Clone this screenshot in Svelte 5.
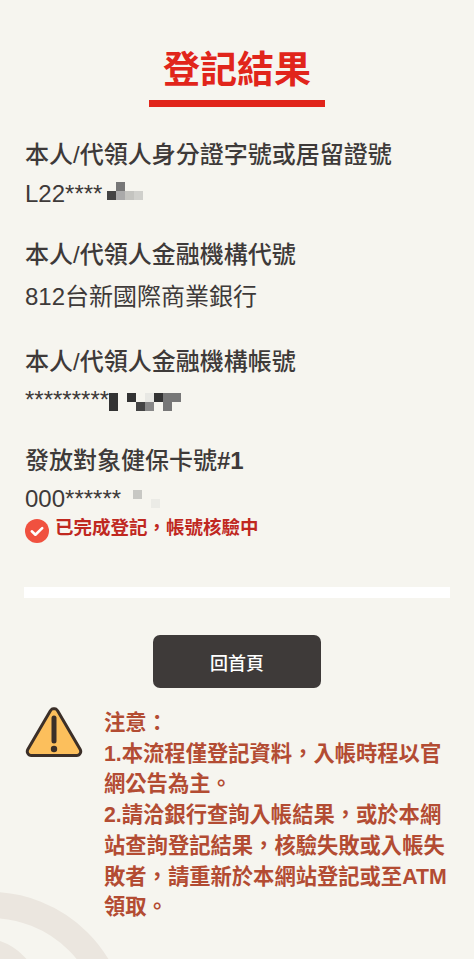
<script>
  const fields = [
    { label: '本人/代領人身分證字號或居留證號', value: 'L22****', blocks: [[0,1,'#444'],[1,1,'#aaa'],[2,1,'#c4c4c0'],[3,1,'#d0d0cc'],[1,0,'#777']], w: 4, x: 5, y: -6 },
    { label: '本人/代領人金融機構代號', value: '812台新國際商業銀行' },
    { label: '本人/代領人金融機構帳號', value: '*********', blocks: [[0,0,'#333'],[0,1,'#333'],[2,0,'#333'],[3,1,'#444'],[4,1,'#888'],[4,0,'#e8e8e4'],[5,0,'#333'],[6,0,'#777'],[7,0,'#777'],[6,1,'#777']], w: 8, x: 0, y: 4 },
    { label: '發放對象健保卡號', suffix: '#1', value: '000******', blocks: [[1,0,'#c8c8c4'],[3,1,'#ebebe6']], w: 4, x: 3, y: 0 }
  ];
</script>

<main class="page">
  <svg class="decor" width="140" height="70" viewBox="0 889 140 70" aria-hidden="true">
    <circle class="outer" cx="-10" cy="1030" r="125" />
    <circle class="inner" cx="-20" cy="1000" r="51" />
  </svg>

  <h1><span>登記結果</span></h1>

  <section class="fields">
    {#each fields as f}
      <div class="field">
        <div class="label">{f.label}{#if f.suffix}<b>{f.suffix}</b>{/if}</div>
        <div class="value">
          {f.value}{#if f.blocks}
            <svg class="mosaic" style="margin-left:{f.x}px;margin-top:{f.y}px" width={f.w * 9} height="18" viewBox="0 0 {f.w * 9} 18" aria-hidden="true">
              {#each f.blocks as b}
                <rect x={b[0] * 9} y={b[1] * 9} width="9" height="9" fill={b[2]} />
              {/each}
            </svg>
          {/if}
        </div>
      </div>
    {/each}
  </section>

  <div class="status">
    <svg width="24" height="24" viewBox="0 0 24 24" aria-hidden="true">
      <circle cx="12" cy="12" r="12" fill="#f0513f" />
      <path d="M6.8 12.3l3.6 3.4 6.8-6.6" fill="none" stroke="#fff" stroke-width="2.6" stroke-linecap="round" stroke-linejoin="round" />
    </svg>
    <span>已完成登記，帳號核驗中</span>
  </div>

  <div class="bar"></div>

  <div class="actions">
    <button type="button">回首頁</button>
  </div>

  <section class="notice">
    <svg class="warn" width="58" height="52" viewBox="0 0 58 52" aria-hidden="true">
      <path d="M29 2.5c-1.6 0-2.8.9-3.6 2.2L2.9 43.2c-1.6 2.8.2 6.3 3.4 6.3h45.4c3.2 0 5-3.5 3.4-6.3L32.6 4.7C31.8 3.4 30.6 2.5 29 2.5z" fill="#fcbf5c" stroke="#3b2f28" stroke-width="3" />
      <path d="M29 12v23" stroke="#3b2f28" stroke-width="5" stroke-linecap="round" />
      <circle cx="29" cy="43" r="3.2" fill="#3b2f28" />
    </svg>
    <div class="notice-text">
      <div>注意：</div>
      <div>1.本流程僅登記資料，入帳時程以官網公告為主。</div>
      <div>2.請洽銀行查詢入帳結果，或於本網站查詢登記結果，核驗失敗或入帳失敗者，請重新於本網站登記或至ATM領取。</div>
    </div>
  </section>
</main>

<style>
  :global(body) {
    margin: 0;
    background: #f6f5ef;
  }

  .page {
    position: relative;
    box-sizing: border-box;
    height: 959px;
    overflow: hidden;
    padding: 0 24px;
    background: #f6f5ef;
    font-family: "Liberation Sans", "Noto Sans CJK TC", sans-serif;
    color: #3e3a39;
  }

  .decor {
    position: absolute;
    left: 0;
    bottom: 0;
  }

  .decor circle {
    fill: none;
    stroke: #ebe6df;
  }

  .decor .outer {
    stroke-width: 26px;
  }

  .decor .inner {
    stroke-width: 22px;
  }

  h1 {
    display: flex;
    justify-content: center;
    margin: 0;
    padding-top: 48px;
  }

  h1 span {
    width: 176px;
    padding-bottom: 6px;
    border-bottom: 7px solid #e1251b;
    font-size: 37px;
    line-height: 46px;
    font-weight: 700;
    color: #e1251b;
    text-align: center;
  }

  .fields {
    display: flex;
    flex-direction: column;
    gap: 27px;
    margin-top: 31px;
    padding-left: 1px;
  }

  .field {
    display: flex;
    flex-direction: column;
    gap: 4px;
  }

  .field:nth-child(1) {
    gap: 5px;
  }

  .field:nth-child(2) {
    gap: 8px;
    margin-bottom: 4px;
  }

  .label {
    font-size: 24px;
    line-height: 34px;
    font-weight: 500;
  }

  .label b {
    font-weight: 700;
  }

  .value {
    display: flex;
    align-items: center;
    font-size: 24px;
    line-height: 34px;
    font-weight: 400;
  }

  .status {
    display: flex;
    align-items: flex-start;
    gap: 6px;
    margin-top: 0;
    padding-left: 1px;
    font-size: 18.5px;
    line-height: 24px;
    font-weight: 700;
    color: #c0281f;
  }

  .status svg {
    margin-top: 3px;
    flex: none;
  }

  .bar {
    height: 11px;
    margin-top: 44px;
    background: #fff;
  }

  .actions {
    display: flex;
    justify-content: center;
    margin-top: 37px;
  }

  button {
    width: 168px;
    height: 53px;
    border: 0;
    border-radius: 7px;
    background: #3e3a39;
    color: #fff;
    font: 500 18px "Liberation Sans", "Noto Sans CJK TC", sans-serif;
  }

  .notice {
    position: relative;
    display: flex;
    align-items: flex-start;
    gap: 21px;
    margin-top: 20px;
    padding-left: 1px;
  }

  .warn {
    flex: none;
    margin-top: -2px;
  }

  .notice-text {
    font-size: 21.3px;
    line-height: 30.7px;
    font-weight: 700;
    color: #b34c33;
  }
</style>
